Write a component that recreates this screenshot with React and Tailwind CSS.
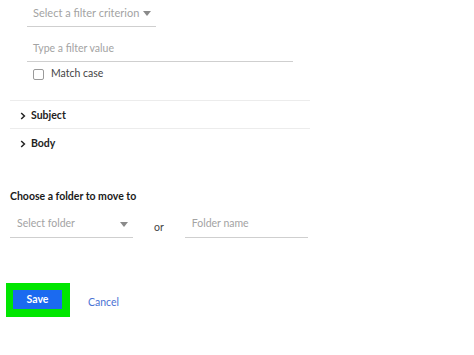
import React from "react";

const Caret = () => (
  <svg width="8" height="5" viewBox="0 0 8 5" className="shrink-0">
    <path d="M0 0 L8 0 L4 5 Z" fill="#8a8a8a" />
  </svg>
);

const Chevron = () => (
  <svg width="6" height="8" viewBox="0 0 6 8" className="shrink-0">
    <path d="M1.2 1 L4.4 4 L1.2 7" fill="none" stroke="#222" strokeWidth="1.5" />
  </svg>
);

export default function App() {
  return (
    <div
      className="w-[474px] h-[355px] bg-white overflow-hidden text-[10.5px] text-[#333] whitespace-nowrap"
      style={{ fontFamily: 'Lato, "Noto Sans", sans-serif' }}
    >
      <div className="w-[300px] ml-[10px]">
        {/* filter block */}
        <div className="pl-[17px]">
          <div className="w-[129px] h-[27px] border-b border-[#cfcfcf] flex items-center justify-between pl-[6px] pr-[5px]">
            <span className="text-[#a3a3a3] text-[11px]">Select a filter criterion</span>
            <Caret />
          </div>
          <div className="mt-[8px] w-[266px] h-[27px] border-b border-[#cfcfcf] flex items-center pl-[6px] pt-[2px]">
            <span className="text-[#a3a3a3]">Type a filter value</span>
          </div>
          <div className="mt-[6px] flex items-center pl-[6px] h-[12px]">
            <div className="w-[11px] h-[11px] border border-[#9a9a9a] rounded-[2px] bg-white" />
            <span className="ml-[7px] text-[#444]">Match case</span>
          </div>
        </div>
        <div className="mt-[20px] border-t border-[#ececec]" />
        <div className="h-[27px] flex items-center pl-[10px] pt-[2px] gap-[5px] font-bold text-[#222]">
          <Chevron />
          <span>Subject</span>
        </div>
        <div className="border-t border-[#ececec]" />
        <div className="h-[29px] flex items-center pl-[10px] gap-[5px] font-bold text-[#222]">
          <Chevron />
          <span>Body</span>
        </div>

        {/* folder block */}
        <div className="mt-[31px] font-bold text-[#1a1a1a] leading-[14px]">
          Choose a folder to move to
        </div>
        <div className="mt-[8px] flex items-start">
          <div className="w-[123px] h-[27px] border-b border-[#cfcfcf] flex items-center justify-between pl-[7px] pr-[5px]">
            <span className="text-[#a3a3a3]">Select folder</span>
            <Caret />
          </div>
          <div className="ml-[21px] mt-[9px] text-[#444]">or</div>
          <div className="ml-[21px] w-[123px] h-[27px] border-b border-[#cfcfcf] flex items-center pl-[7px]">
            <span className="text-[#a3a3a3]">Folder name</span>
          </div>
        </div>
      </div>

      <div className="mt-[45px] ml-[6px] flex items-center">
        <div className="bg-[#00e600] p-[7px] pb-[8px] pr-[8px]">
          <button className="w-[49px] h-[19px] bg-[#1b6af0] text-white font-bold text-[10.5px] flex items-center justify-center pt-[1px]">
            Save
          </button>
        </div>
        <span className="ml-[18px] mt-[5px] text-[#4a72d4]">Cancel</span>
      </div>
    </div>
  );
}
